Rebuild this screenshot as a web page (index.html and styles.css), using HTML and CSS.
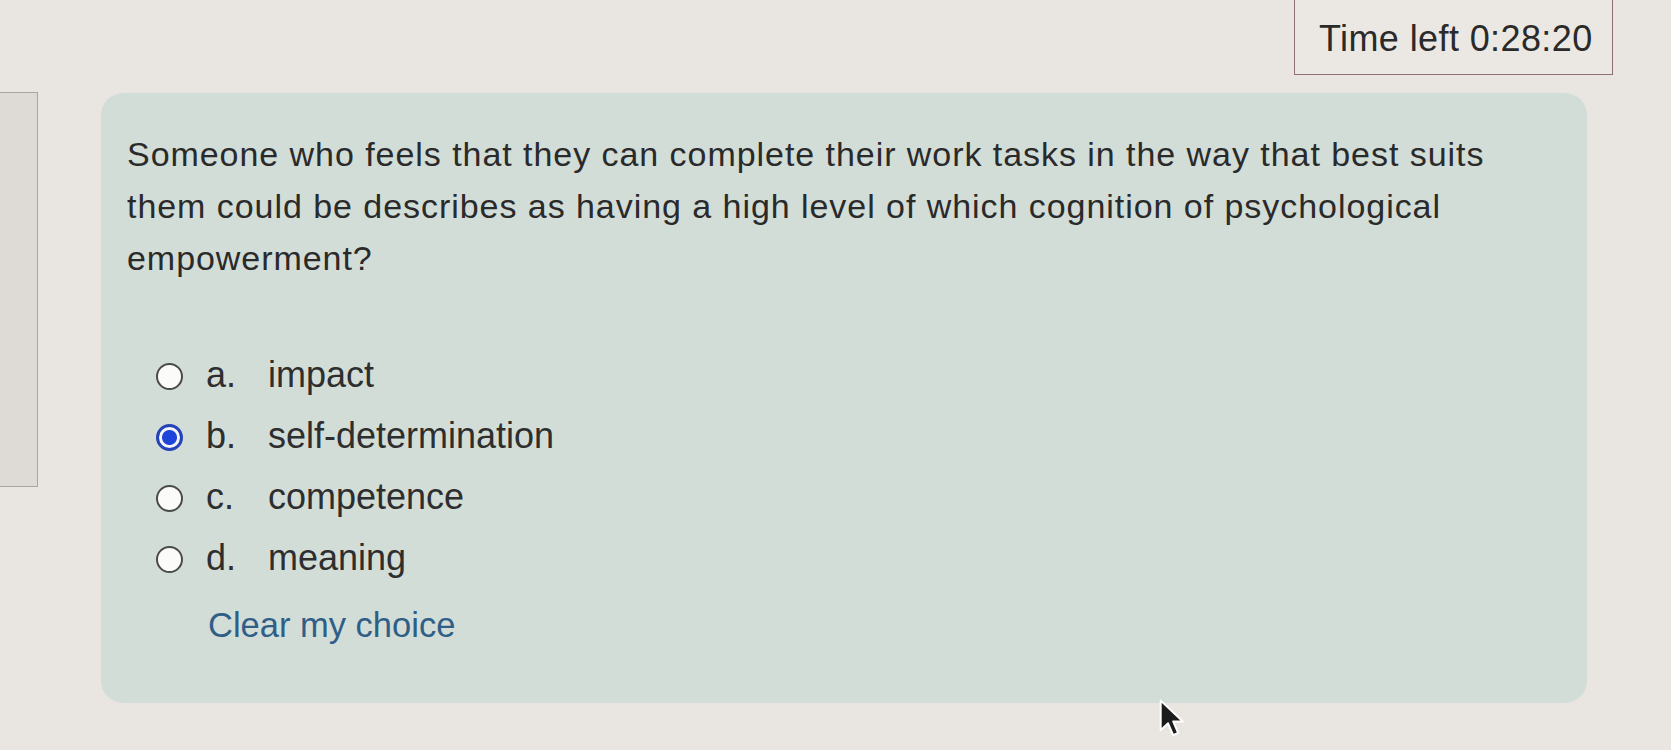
FILE: index.html
```html
<!DOCTYPE html>
<html lang="en">
<head>
<meta charset="utf-8">
<title>Quiz question</title>
<link rel="stylesheet" href="styles.css">
</head>
<body>
<header class="topbar">
  <div class="timer">Time left 0:28:20</div>
</header>
<main class="layout">
  <aside class="info-panel"></aside>
  <section class="question-card">
    <p class="question-text">Someone who feels that they can complete their work tasks in the way that best suits them could be describes as having a high level of which cognition of psychological empowerment?</p>
    <div class="answers">
      <label class="answer"><span class="radio"></span><span class="letter">a.</span><span class="answer-text">impact</span></label>
      <label class="answer"><span class="radio checked"></span><span class="letter">b.</span><span class="answer-text">self-determination</span></label>
      <label class="answer"><span class="radio"></span><span class="letter">c.</span><span class="answer-text">competence</span></label>
      <label class="answer"><span class="radio"></span><span class="letter">d.</span><span class="answer-text">meaning</span></label>
      <a class="clear-choice" href="#">Clear my choice</a>
    </div>
  </section>
</main>
<svg class="cursor" width="28" height="41" viewBox="0 0 17 25" aria-hidden="true">
  <path d="M1 1 L1 19 L5.5 14.8 L8.6 22 L11.6 20.7 L8.6 13.7 L14.5 13.7 Z" fill="#1c1c1c" stroke="#ffffff" stroke-width="1.2" stroke-linejoin="round"/>
</svg>
</body>
</html>
```

FILE: styles.css
```css
html, body {
  margin: 0;
  padding: 0;
}

body {
  width: 1671px;
  height: 750px;
  overflow: hidden;
  position: relative;
  background: #e9e6e1;
  font-family: "Liberation Sans", Arial, sans-serif;
  color: #2e2e2e;
}

.topbar {
  display: flex;
  justify-content: flex-end;
  padding-right: 58px;
}

.timer {
  box-sizing: border-box;
  margin-top: -10px;
  height: 85px;
  width: 319px;
  padding: 28px 0 0 24px;
  font-size: 36px;
  letter-spacing: 0.4px;
  line-height: 40px;
  color: #2a2a2a;
  border: 1.5px solid #8d7070;
  background: #ebe8e3;
}

.layout {
  display: flex;
  align-items: flex-start;
  margin-top: 18px;
}

.info-panel {
  box-sizing: border-box;
  width: 38px;
  height: 395px;
  margin-top: -1px;
  background: #dedbd6;
  border: 1.5px solid #a8a6a2;
  border-left: none;
}

.question-card {
  box-sizing: border-box;
  margin-left: 63px;
  width: 1486px;
  height: 610px;
  padding: 35px 0 0 26px;
  background: #d3ddd8;
  border-radius: 22px;
}

.question-text {
  margin: 0;
  max-width: 1400px;
  font-size: 34px;
  letter-spacing: 0.95px;
  line-height: 52px;
  color: #2a2a2a;
}

.answers {
  margin-top: 60px;
  padding-left: 29px;
  display: flex;
  flex-direction: column;
  align-items: flex-start;
}

.answer {
  display: flex;
  align-items: center;
  height: 61px;
  font-size: 36px;
  line-height: 61px;
  color: #2e2e2e;
}

.radio {
  box-sizing: border-box;
  width: 27px;
  height: 27px;
  border-radius: 50%;
  border: 2.5px solid #4a4a4a;
  background: #fbfbfa;
  margin-right: 23px;
  margin-top: 4px;
}

.radio.checked {
  border: 3px solid #2443b8;
  background: radial-gradient(circle, #1e45d8 0 7px, #f3f5fb 8px 100%);
}

.letter {
  width: 62px;
}

.clear-choice {
  margin: 7px 0 0 52px;
  font-size: 34.5px;
  line-height: 61px;
  color: #2f5f86;
  text-decoration: none;
}

.cursor {
  position: absolute;
  left: 1159px;
  top: 699px;
}
```
